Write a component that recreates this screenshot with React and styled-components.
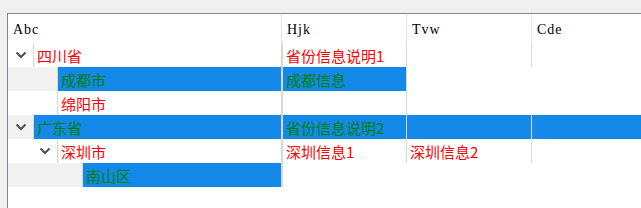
import React from "react";
import styled, { createGlobalStyle } from "styled-components";

const GlobalStyle = createGlobalStyle`
  html, body {
    margin: 0;
    padding: 0;
    background: #f0f0f0;
    overflow: hidden;
  }
`;

const HEADER_COLS = "274px 125px 125px 1fr";
const BODY_COLS = "275px 124px 125px 1fr";
const INDENT = 25;

const columns = ["Abc", "Hjk", "Tvw", "Cde"];

// each cell: text, colour, sep (right separator drawn)
const rows = [
  {
    level: 0,
    expandable: true,
    selected: false,
    cells: [
      { text: "四川省", tone: "red", sep: true },
      { text: "省份信息说明1", tone: "red", sep: true },
      { text: "", sep: true },
      { text: "", sep: false },
    ],
  },
  {
    level: 1,
    selected: true,
    partial: 2,
    cells: [
      { text: "成都市", tone: "green", sep: true },
      { text: "成都信息", tone: "green", sep: true },
      { text: "", sep: false },
      { text: "", sep: false },
    ],
  },
  {
    level: 1,
    selected: false,
    cells: [
      { text: "绵阳市", tone: "red", sep: true },
      { text: "", sep: true },
      { text: "", sep: false },
      { text: "", sep: false },
    ],
  },
  {
    level: 0,
    expandable: true,
    selected: true,
    partial: 4,
    cells: [
      { text: "广东省", tone: "green", sep: true },
      { text: "省份信息说明2", tone: "green", sep: true },
      { text: "", sep: true },
      { text: "", sep: false },
    ],
  },
  {
    level: 1,
    expandable: true,
    selected: false,
    cells: [
      { text: "深圳市", tone: "red", sep: true },
      { text: "深圳信息1", tone: "red", sep: true },
      { text: "深圳信息2", tone: "red", sep: true },
      { text: "", sep: false },
    ],
  },
  {
    level: 2,
    selected: true,
    partial: 1,
    cells: [
      { text: "南山区", tone: "green", sep: true },
      { text: "", sep: false },
      { text: "", sep: false },
      { text: "", sep: false },
    ],
  },
];

const Tree = styled.div`
  margin: 13px 0 0 7px;
  width: calc(100vw - 7px);
  height: calc(100vh - 13px);
  overflow: hidden;
  background: #ffffff;
  border-top: 1px solid #828790;
  border-left: 1px solid #828790;
  box-sizing: border-box;
`;

const Header = styled.div`
  display: grid;
  grid-template-columns: ${HEADER_COLS};
  height: 29px;
`;

const HeaderCell = styled.div`
  box-sizing: border-box;
  display: flex;
  align-items: center;
  padding-left: 5px;
  padding-top: 3px;
  font-family: "Liberation Serif", "DejaVu Serif", serif;
  font-size: 14px;
  letter-spacing: 1px;
  color: #000000;
  border-right: 1px solid ${(p) => (p.$last ? "transparent" : "#e5e5e5")};
`;

const Row = styled.div`
  display: grid;
  grid-template-columns: ${BODY_COLS};
  height: 24px;
`;

const FirstCell = styled.div`
  display: flex;
  min-width: 0;
`;

const Branch = styled.div`
  flex: 0 0 ${(p) => p.$width}px;
  display: flex;
  justify-content: flex-end;
  background: ${(p) => (p.$selected ? "#f2f2f2" : "#ffffff")};
`;

const Arrow = styled.div`
  width: ${INDENT}px;
  display: flex;
  align-items: center;
  justify-content: center;
`;

const Cell = styled.div`
  box-sizing: border-box;
  flex: 1;
  min-width: 0;
  display: flex;
  align-items: center;
  padding-left: 3px;
  padding-top: 1px;
  font-family: "Noto Sans CJK SC", "Noto Sans", sans-serif;
  font-size: 15px;
  white-space: nowrap;
  overflow: hidden;
  color: ${(p) => (p.$tone === "green" ? "#008000" : "#ff0000")};
  background: ${(p) => (p.$selected ? "#1489e9" : "#ffffff")};
  border-left: ${(p) => (p.$lead ? "1px solid #d8d8d8" : "none")};
  border-right: ${(p) => p.$sepWidth}px solid
    ${(p) => (p.$sep ? "#d8d8d8" : "transparent")};
`;

function Chevron() {
  return (
    <svg width="12" height="8" viewBox="0 0 12 8">
      <path
        d="M1.5 1.5 L6 6 L10.5 1.5"
        fill="none"
        stroke="#4d4d4d"
        strokeWidth="2"
      />
    </svg>
  );
}

function TreeRow({ row }) {
  const branchWidth = INDENT * (row.level + 1) - 1;
  const span = row.partial || 4;
  return (
    <Row>
      <FirstCell>
        <Branch $width={branchWidth} $selected={row.selected}>
          <Arrow>{row.expandable && <Chevron />}</Arrow>
        </Branch>
        <Cell
          $lead
          $tone={row.cells[0].tone}
          $selected={row.selected}
          $sep={row.cells[0].sep}
          $sepWidth={2}
        >
          {row.cells[0].text}
        </Cell>
      </FirstCell>
      {row.cells.slice(1).map((c, i) => (
        <Cell
          key={i}
          $tone={c.tone}
          $selected={row.selected && i + 1 < span}
          $sep={c.sep}
          $sepWidth={1}
        >
          {c.text}
        </Cell>
      ))}
    </Row>
  );
}

export default function App() {
  return (
    <>
      <GlobalStyle />
      <Tree>
        <Header>
          {columns.map((c, i) => (
            <HeaderCell key={c} $last={i === columns.length - 1}>
              {c}
            </HeaderCell>
          ))}
        </Header>
        {rows.map((r, i) => (
          <TreeRow key={i} row={r} />
        ))}
      </Tree>
    </>
  );
}
